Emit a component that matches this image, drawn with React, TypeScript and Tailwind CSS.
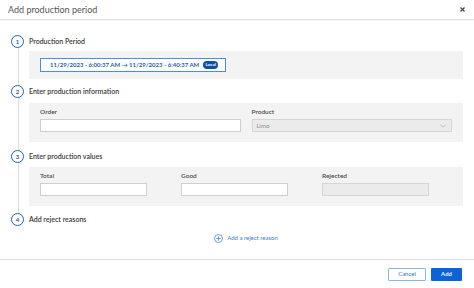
import React from "react";

function Circle({ n }: { n: number }) {
  return (
    <div className="w-[13px] h-[13px] shrink-0 rounded-full border-[1.5px] border-[#1f63b6] bg-white flex items-center justify-center text-[6px] font-semibold text-[#1d3f6e] leading-none">
      {n}
    </div>
  );
}

function StepHead({ n, title }: { n: number; title: string }) {
  return (
    <div className="flex items-center gap-[5px] h-[13px]">
      <Circle n={n} />
      <span className="text-[7px] font-semibold text-[#3a3a3a] leading-none">{title}</span>
    </div>
  );
}

function Label({ children }: { children: React.ReactNode }) {
  return <div className="text-[6.5px] font-semibold text-[#4a4a4a] h-[9px] leading-[9px]">{children}</div>;
}

export default function App() {
  return (
    <div className="w-[474px] h-[288px] bg-white flex flex-col font-['Lato',sans-serif] text-[#333] overflow-hidden">
      <div className="h-[20px] shrink-0 flex items-center justify-between pl-[8px] pr-[9px] border-b border-[#e2e2e2] shadow-[0_1px_2px_rgba(0,0,0,0.05)]">
        <span className="text-[9px] text-[#555] leading-none">Add production period</span>
        <svg width="5" height="5" viewBox="0 0 5 5">
          <path d="M0.5 0.5 L4.5 4.5 M4.5 0.5 L0.5 4.5" stroke="#444" strokeWidth="1.2" />
        </svg>
      </div>

      <div className="flex-1 pl-[11px] pr-[11px] pt-[15px]">
        {/* Step 1 */}
        <StepHead n={1} title="Production Period" />
        <div className="ml-[7px] border-l border-[#dddddd] pl-[10px] pt-[3px] pb-[6px]">
          <div className="bg-[#f3f3f3] h-[28px] flex items-center pl-[11px]">
            <div className="w-[186px] h-[14px] border border-[#4a8fd6] bg-white flex items-center pl-[9px] gap-[4px]">
              <span className="text-[6px] font-bold text-[#2d5f99] leading-none whitespace-nowrap">
                11/29/2023 - 6:00:37 AM → 11/29/2023 - 6:40:37 AM
              </span>
              <span className="h-[8px] w-[15px] rounded-full bg-[#0f4fa6] text-white text-[4.5px] font-bold flex items-center justify-center leading-none">
                Local
              </span>
            </div>
          </div>
        </div>

        {/* Step 2 */}
        <StepHead n={2} title="Enter production information" />
        <div className="ml-[7px] border-l border-[#dddddd] pl-[10px] pt-[5px] pb-[8px]">
          <div className="bg-[#f3f3f3] pt-[4px] pb-[10px] pl-[11px] pr-[11px] grid grid-cols-2 gap-x-[11px]">
            <div>
              <Label>Order</Label>
              <div className="mt-[3px] h-[13px] bg-white border border-[#cfcfcf]" />
            </div>
            <div>
              <Label>Product</Label>
              <div className="mt-[3px] h-[13px] bg-[#ebebeb] border border-[#d6d6d6] flex items-center justify-between pl-[4px] pr-[5px]">
                <span className="text-[6px] text-[#8a8a8a] leading-none">Limo</span>
                <svg width="6" height="4" viewBox="0 0 6 4">
                  <path d="M0.5 0.8 L3 3.2 L5.5 0.8" stroke="#b0b0b0" strokeWidth="0.8" fill="none" />
                </svg>
              </div>
            </div>
          </div>
        </div>

        {/* Step 3 */}
        <StepHead n={3} title="Enter production values" />
        <div className="ml-[7px] border-l border-[#dddddd] pl-[10px] pt-[4px] pb-[7px]">
          <div className="bg-[#f3f3f3] pt-[4px] pb-[10px] pl-[11px] grid grid-cols-[130px_130px_107px] gap-x-[11px]">
            <div>
              <Label>Total</Label>
              <div className="mt-[3px] w-[107px] h-[13px] bg-white border border-[#cfcfcf]" />
            </div>
            <div>
              <Label>Good</Label>
              <div className="mt-[3px] w-[107px] h-[13px] bg-white border border-[#cfcfcf]" />
            </div>
            <div>
              <Label>Rejected</Label>
              <div className="mt-[3px] w-[107px] h-[13px] bg-[#ebebeb] border border-[#d6d6d6]" />
            </div>
          </div>
        </div>

        {/* Step 4 */}
        <StepHead n={4} title="Add reject reasons" />
        <div className="pl-[18px] mt-[7px] flex justify-center">
          <div className="flex items-center gap-[4px] h-[10px]">
            <svg width="9" height="9" viewBox="0 0 9 9">
              <circle cx="4.5" cy="4.5" r="4" stroke="#4a86d6" strokeWidth="0.8" fill="none" />
              <path d="M4.5 2.3 V6.7 M2.3 4.5 H6.7" stroke="#4a86d6" strokeWidth="0.8" />
            </svg>
            <span className="text-[6px] text-[#3b7bd0] leading-none">Add a reject reason</span>
          </div>
        </div>
      </div>

      <div className="h-[29px] shrink-0 border-t border-[#dcdcdc] flex items-center justify-end gap-[5px] pr-[12px]">
        <button className="w-[38px] h-[13px] border border-[#8db5e6] rounded-[1px] bg-white text-[6px] text-[#2f6fc2] leading-none flex items-center justify-center">
          Cancel
        </button>
        <button className="w-[31px] h-[13px] rounded-[1px] bg-[#0b63d6] text-[6px] font-semibold text-white leading-none flex items-center justify-center">
          Add
        </button>
      </div>
    </div>
  );
}
